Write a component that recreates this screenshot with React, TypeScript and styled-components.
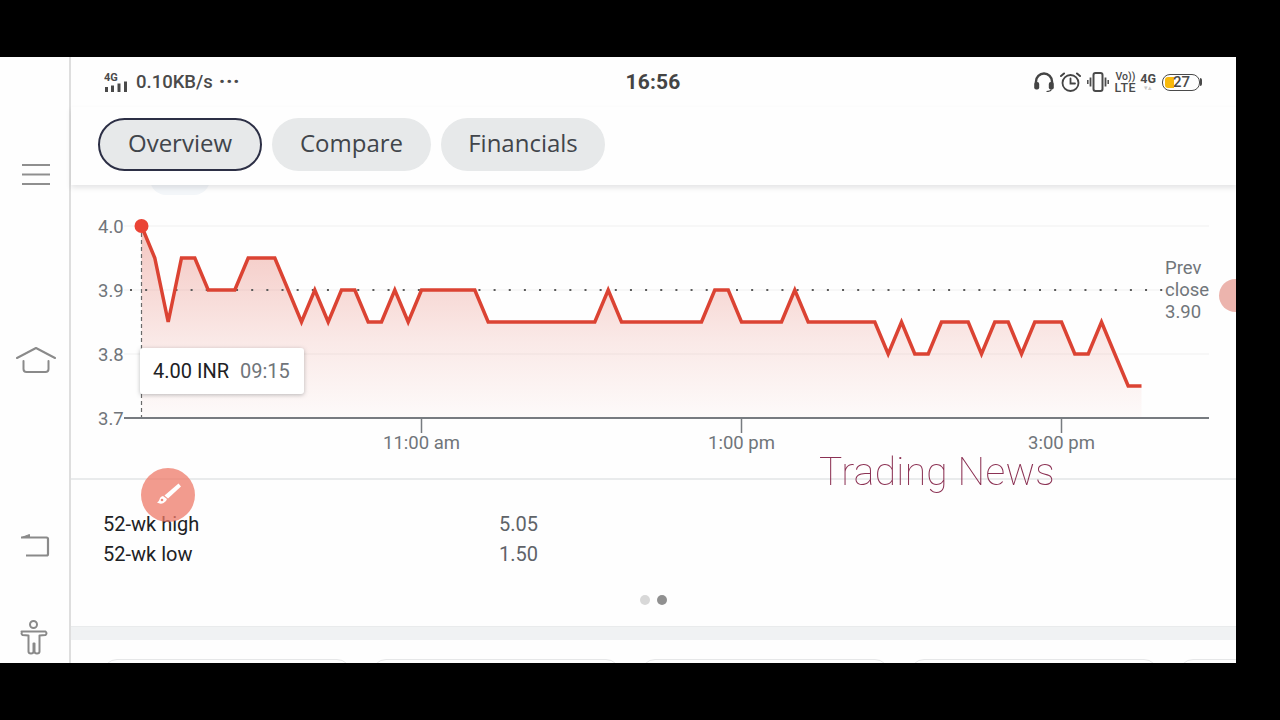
import React from "react";
import styled, { createGlobalStyle } from "styled-components";

const Global = createGlobalStyle`
  html, body { margin: 0; padding: 0; background: #000; }
  body { width: 1280px; height: 720px; overflow: hidden; font-family: Roboto, "Liberation Sans", sans-serif; }
`;

const Page = styled.div`
  width: 1280px;
  height: 720px;
  padding-top: 57px;
  box-sizing: border-box;
  background: #000;
`;

const Screen = styled.div`
  position: relative;
  width: 1236px;
  height: 606px;
  background: #fefefe;
  overflow: hidden;
  display: flex;
`;

const Rail = styled.nav`
  width: 66px;
  flex: none;
  border-right: 2px solid #dedede;
  box-sizing: content-box;
  display: flex;
  flex-direction: column;
  align-items: center;
  padding: 107px 0 0 3px;
`;

const RailSlot = styled.div<{ $h: number; $shift?: number }>`
  height: ${(p) => p.$h}px;
  flex: none;
  display: flex;
  justify-content: center;
  align-items: flex-start;
  margin-left: ${(p) => p.$shift ?? 0}px;
`;

const Main = styled.main`
  flex: 1;
  min-width: 0;
  display: flex;
  flex-direction: column;
`;

const StatusBar = styled.div`
  height: 50px;
  flex: none;
  display: grid;
  grid-template-columns: 1fr auto 1fr;
  align-items: center;
  padding: 0 34px 0 33px;
  color: #444;
`;

const StatusLeft = styled.div`
  display: flex;
  align-items: center;
  gap: 6px;
  font-size: 18.5px;
  font-weight: 500;
  color: #4a4a4a;
`;

const MoreDots = styled.span`
  font-size: 22px;
  line-height: 18px;
  letter-spacing: 0.5px;
  font-weight: 700;
`;

const Clock = styled.div`
  font-size: 21px;
  font-weight: 700;
  color: #444;
  letter-spacing: 0.2px;
`;

const StatusRight = styled.div`
  display: flex;
  justify-content: flex-end;
  align-items: center;
  gap: 6px;
`;

const TinyStack = styled.div<{ $pull?: number }>`
  display: flex;
  flex-direction: column;
  align-items: center;
  font-weight: 500;
  color: #4a4a4a;
  margin-left: ${(p) => p.$pull ?? 0}px;
`;

const VoText = styled.span`
  font-size: 10.5px;
  line-height: 11px;
`;

const Lte = styled.span`
  font-size: 12.5px;
  line-height: 12px;
  letter-spacing: 0.6px;
`;

const FourG = styled.span`
  font-size: 12.5px;
  font-weight: 700;
  line-height: 13px;
`;

const Arrows = styled.span`
  font-size: 7px;
  color: #c9c9c9;
  line-height: 7px;
`;

const Battery = styled.div`
  position: relative;
  width: 38px;
  height: 17px;
  box-sizing: border-box;
  border: 1.5px solid #4a4a4a;
  border-radius: 8px;
  display: flex;
  align-items: center;
  padding-left: 10px;
  font-size: 15px;
  color: #4a4a4a;
  font-weight: 500;
  overflow: hidden;
  &::before {
    content: "";
    position: absolute;
    left: 2px;
    top: 2px;
    bottom: 2px;
    width: 9px;
    border-radius: 3px 0 0 3px;
    background: #f8b90a;
  }
`;

const BatteryLabel = styled.span`
  position: relative;
  line-height: 14px;
`;

const BatteryWrap = styled.div`
  display: flex;
  align-items: center;
  &::after {
    content: "";
    width: 2px;
    height: 8px;
    background: #4a4a4a;
    border-radius: 0 2px 2px 0;
  }
`;

const TabBar = styled.div`
  position: relative;
  z-index: 2;
  height: 78px;
  flex: none;
  padding: 11px 0 0 27px;
  box-sizing: border-box;
  display: flex;
  gap: 10px;
  align-items: flex-start;
  background: #fefefe;
  box-shadow: 0 3px 5px rgba(60, 64, 67, 0.13);
`;

const Chip = styled.div<{ $active?: boolean; $w: number }>`
  width: ${(p) => p.$w}px;
  height: 53px;
  box-sizing: border-box;
  border-radius: 27px;
  background: #e7e9ea;
  border: ${(p) => (p.$active ? "2px solid #2c2f45" : "none")};
  color: #41454b;
  font-family: "Open Sans", Roboto, sans-serif;
  font-size: 24px;
  padding-bottom: 4px;
  display: flex;
  align-items: center;
  justify-content: center;
`;

const ChartSection = styled.section`
  position: relative;
  height: 295px;
  flex: none;
  border-bottom: 2px solid #e9ebec;
  box-sizing: border-box;
`;

const ChartSvg = styled.svg`
  display: block;
  width: 1165px;
  height: 295px;
`;

const AxisText = styled.text`
  font-family: Roboto, sans-serif;
  font-size: 18.5px;
  fill: #70757a;
`;

const Tooltip = styled.div`
  position: absolute;
  left: 69px;
  top: 163px;
  width: 164px;
  height: 46px;
  box-sizing: border-box;
  background: #fff;
  border-radius: 3px;
  box-shadow: 0 1px 4px rgba(60, 64, 67, 0.35);
  display: flex;
  align-items: center;
  gap: 11px;
  padding-left: 13px;
  font-size: 20px;
  color: #202124;
`;

const TipTime = styled.span`
  color: #70757a;
`;

const PrevClose = styled.div`
  position: absolute;
  left: 1094px;
  top: 72px;
  font-size: 18.5px;
  line-height: 22px;
  color: #70757a;
`;

const Watermark = styled.div`
  position: absolute;
  left: 819px;
  top: 392px;
  font-family: Roboto, sans-serif;
  font-weight: 100;
  font-size: 39px;
  line-height: 46px;
  letter-spacing: 0.3px;
  color: #8a2f52;
  white-space: nowrap;
  z-index: 3;
  opacity: 0.99;
  will-change: opacity;
`;

const Stats = styled.div`
  padding: 29px 0 0 32px;
  height: 115px;
  box-sizing: border-box;
  flex: none;
  display: grid;
  grid-template-columns: 396px auto;
  grid-auto-rows: 30px;
  align-items: center;
  justify-content: start;
  align-content: start;
  font-size: 20px;
  color: #202124;
`;

const StatValue = styled.span`
  color: #5f6368;
`;

const Dots = styled.div`
  display: flex;
  gap: 7px;
  justify-content: center;
  height: 31px;
  flex: none;
`;

const Dot = styled.span<{ $on?: boolean }>`
  width: 10px;
  height: 10px;
  border-radius: 50%;
  background: ${(p) => (p.$on ? "#909090" : "#d8d8d8")};
`;

const Band = styled.div`
  height: 14px;
  flex: none;
  background: #f0f2f3;
  border-top: 1px solid #e9ebec;
  box-sizing: border-box;
`;

const CardRow = styled.div`
  display: flex;
  gap: 21px;
  padding: 19px 0 0 32px;
  flex: 1;
  min-height: 0;
`;

const MiniCard = styled.div`
  width: 248px;
  height: 30px;
  flex: none;
  border: 1px solid #e6e7e8;
  border-radius: 14px;
  box-sizing: border-box;
`;

const Fab = styled.div`
  position: absolute;
  left: 141px;
  top: 411px;
  width: 54px;
  height: 54px;
  border-radius: 50%;
  background: rgba(238, 122, 104, 0.75);
  display: flex;
  align-items: center;
  justify-content: center;
  z-index: 3;
`;

const EdgeBubble = styled.div`
  position: absolute;
  left: 1219px;
  top: 222px;
  width: 33px;
  height: 33px;
  border-radius: 50%;
  background: rgba(224, 130, 118, 0.6);
  z-index: 3;
`;

const ChipGhost = styled.div`
  position: absolute;
  left: 150px;
  top: 122px;
  width: 60px;
  height: 16px;
  border-radius: 0 0 30px 30px;
  background: #f3f6f9;
  z-index: 1;
`;

const values = [
  226, 258, 322, 258, 258, 290, 290, 290, 258, 258, 258, 290, 322, 290, 322, 290, 290, 322, 322, 290, 322,
  290, 290, 290, 290, 290, 322, 322, 322, 322, 322, 322, 322, 322, 322, 290, 322, 322, 322, 322, 322, 322,
  322, 290, 290, 322, 322, 322, 322, 290, 322, 322, 322, 322, 322, 322, 354, 322, 354, 354, 322, 322, 322,
  354, 322, 322, 354, 322, 322, 322, 354, 354, 322, 354, 386, 386,
];
const OX = 71;
const OY = 185;
const px = (i: number) => 141.5 - OX + (i * 40) / 3;
const py = (y: number) => y - OY;
const linePts = values.map((v, i) => `${px(i).toFixed(1)},${py(v)}`).join(" ");
const areaPts = `${px(0)},${py(418)} ${linePts} ${px(75).toFixed(1)},${py(418)}`;

const dotted = Array.from({ length: 69 }, (_, i) => 130 - OX + i * 15.15);

const Hamburger = () => (
  <svg width="28" height="21" viewBox="0 0 28 21" stroke="#8f8f8f" strokeWidth="2" fill="none">
    <path d="M0 1h28M0 10.500h28M0 20h28" />
  </svg>
);
const HomeIcon = () => (
  <svg width="40" height="26" viewBox="0 0 40 26" stroke="#8a8a8a" strokeWidth="2" fill="none" strokeLinecap="round" strokeLinejoin="round">
    <path d="M1 11 20 1l19 10" />
    <path d="M7.500 14v8q0 3 3 3h19q3 0 3-3v-8" />
  </svg>
);
const BackIcon = () => (
  <svg width="30" height="24" viewBox="0 0 30 24" stroke="#8a8a8a" strokeWidth="2.200" fill="none" strokeLinejoin="round">
    <path d="M1 4.500h25.500q1.500 0 1.500 1.500v15q0 1.500-1.500 1.500H6" />
    <path d="M1.500 4.500l8-3v3z" fill="#8a8a8a" strokeWidth="1" />
  </svg>
);
const PersonIcon = () => (
  <svg width="30" height="35" viewBox="0 0 30 35" stroke="#8a8a8a" strokeWidth="2" fill="none" strokeLinejoin="round">
    <circle cx="14.500" cy="4.500" r="3.500" />
    <path d="M2.500 11.500h24q2 1.500 0 3.500l-6 .5v16q0 2-2.500 2t-2.500-2v-8h-1v8q0 2-2.500 2t-2.500-2v-16l-6-.5q-2-2 0-3.500z" />
  </svg>
);
const SignalIcon = () => (
  <svg width="26" height="21" viewBox="0 0 26 21" fill="#4a4a4a">
    <text x="0" y="9" fontFamily="Roboto, sans-serif" fontSize="11" fontWeight="700">4G</text>
    <rect x="1" y="15" width="3" height="5" />
    <rect x="7" y="13.500" width="3" height="6.500" />
    <rect x="13.500" y="11.500" width="3" height="8.500" />
    <rect x="20" y="9.500" width="3" height="10.500" />
  </svg>
);
const HeadsetIcon = () => (
  <svg width="20" height="20" viewBox="0 0 20 20" fill="none">
    <path d="M2 12V9.500a8 8 0 0 1 16 0V12" stroke="#444" strokeWidth="2.400" />
    <rect x="0.200" y="10" width="5" height="7.500" rx="2" fill="#444" />
    <rect x="14.800" y="10" width="5" height="7.500" rx="2" fill="#444" />
    <path d="M17.500 17.500q-1 2-5 2" stroke="#444" strokeWidth="1.200" />
  </svg>
);
const AlarmIcon = () => (
  <svg width="21" height="20" viewBox="0 0 21 20" fill="none" stroke="#444" strokeWidth="1.800" strokeLinecap="round">
    <circle cx="10.500" cy="11" r="8" />
    <path d="M10.500 6.500V11.500H15" />
    <path d="M1 4 4 1.500M20 4l-3-2.500" strokeWidth="2" />
  </svg>
);
const VibrateIcon = () => (
  <svg width="22" height="20" viewBox="0 0 22 20" fill="none" stroke="#4a4a4a">
    <rect x="6.500" y="1" width="9" height="18" rx="2" strokeWidth="2" />
    <path d="M3.500 5.500v9M18.500 5.500v9" strokeWidth="1.800" />
    <path d="M.8 8v4M21.200 8v4" strokeWidth="1.500" />
  </svg>
);
const BrushIcon = () => (
  <svg width="30" height="30" viewBox="0 0 30 30" fill="#fff">
    <path d="M25.500 3.500 28 6.500 15 18.500l-3.500-3z" />
    <path d="M10 16q-3 .5-3.500 3.500-.5 2-2.500 3 3.500 2 6.500 .5 3-1.500 3.500-4z" />
    <circle cx="9" cy="20" r="1.300" fill="#ee8a7c" />
  </svg>
);

export default function App() {
  return (
    <>
      <Global />
      <Page>
        <Screen>
          <Rail>
            <RailSlot $h={183}><Hamburger /></RailSlot>
            <RailSlot $h={186}><HomeIcon /></RailSlot>
            <RailSlot $h={87} $shift={-3}><BackIcon /></RailSlot>
            <RailSlot $h={43} $shift={-4}><PersonIcon /></RailSlot>
          </Rail>
          <Main>
            <StatusBar>
              <StatusLeft>
                <SignalIcon />
                <span>0.10KB/s</span>
                <MoreDots>···</MoreDots>
              </StatusLeft>
              <Clock>16:56</Clock>
              <StatusRight>
                <HeadsetIcon />
                <AlarmIcon />
                <VibrateIcon />
                <TinyStack>
                  <VoText>Vo))</VoText>
                  <Lte>LTE</Lte>
                </TinyStack>
                <TinyStack $pull={-2}>
                  <FourG>4G</FourG>
                  <Arrows>▾▴</Arrows>
                </TinyStack>
                <BatteryWrap>
                  <Battery><BatteryLabel>27</BatteryLabel></Battery>
                </BatteryWrap>
              </StatusRight>
            </StatusBar>
            <TabBar>
              <Chip $active $w={164}>Overview</Chip>
              <Chip $w={159}>Compare</Chip>
              <Chip $w={164}>Financials</Chip>
            </TabBar>
            <ChartSection>
              <ChartSvg viewBox="0 0 1165 295">
                <defs>
                  <linearGradient id="area" x1="0" y1="0" x2="0" y2="1">
                    <stop offset="0" stopColor="#e8897e" stopOpacity="0.48" />
                    <stop offset="0.6" stopColor="#e8897e" stopOpacity="0.18" />
                    <stop offset="1" stopColor="#e8897e" stopOpacity="0.03" />
                  </linearGradient>
                </defs>
                <path d={`M53 ${py(226)}H1138M53 ${py(290)}H1138M53 ${py(354)}H1138`} stroke="#f5f5f5" strokeWidth="1.500" />
                <polygon points={areaPts} fill="url(#area)" />
                {dotted.map((x) => (
                  <rect key={x} x={x} y={py(290) - 1} width="2" height="2" fill="#5a5a5a" />
                ))}
                <path d={`M${px(0)} ${py(226)}V${py(418)}`} stroke="#6a6a6a" strokeWidth="1.200" strokeDasharray="4 3" />
                <polyline points={linePts} fill="none" stroke="#db4333" strokeWidth="3.500" strokeLinejoin="miter" />
                <circle cx={px(0)} cy={py(226)} r="7" fill="#ea4335" />
                <path d={`M53 ${py(418)}H1138`} stroke="#777b80" strokeWidth="2" />
                <path d={`M350.500 ${py(418)}v15M670.500 ${py(418)}v15M990.500 ${py(418)}v15`} stroke="#777b80" strokeWidth="1.500" />
                <AxisText x="27" y={py(233)}>4.0</AxisText>
                <AxisText x="27" y={py(297)}>3.9</AxisText>
                <AxisText x="27" y={py(361)}>3.8</AxisText>
                <AxisText x="27" y={py(425)}>3.7</AxisText>
                <AxisText x="350.500" y={py(449)} textAnchor="middle">11:00 am</AxisText>
                <AxisText x="670.500" y={py(449)} textAnchor="middle">1:00 pm</AxisText>
                <AxisText x="990.500" y={py(449)} textAnchor="middle">3:00 pm</AxisText>
              </ChartSvg>
              <Tooltip>
                <span>4.00 INR</span>
                <TipTime>09:15</TipTime>
              </Tooltip>
              <PrevClose>Prev<br />close<br />3.90</PrevClose>
            </ChartSection>
            <Stats>
              <span>52-wk high</span>
              <StatValue>5.05</StatValue>
              <span>52-wk low</span>
              <StatValue>1.50</StatValue>
            </Stats>
            <Dots>
              <Dot />
              <Dot $on />
            </Dots>
            <Band />
            <CardRow>
              <MiniCard />
              <MiniCard />
              <MiniCard />
              <MiniCard />
              <MiniCard />
            </CardRow>
          </Main>
          <ChipGhost />
          <Fab><BrushIcon /></Fab>
          <EdgeBubble />
          <Watermark>Trading News</Watermark>
        </Screen>
      </Page>
    </>
  );
}
